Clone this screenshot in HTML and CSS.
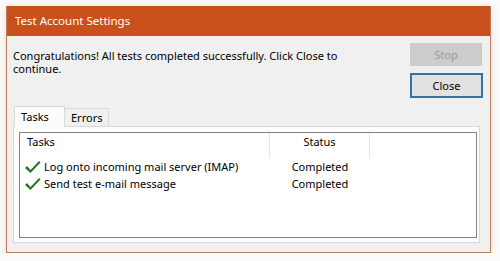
FILE: index.html
```html
<!DOCTYPE html>
<html>
<head>
<meta charset="utf-8">
<link rel="stylesheet" href="styles.css">
</head>
<body>
<div class="window">
  <div class="titlebar">Test Account Settings</div>
  <div class="content">
    <div class="top">
      <div class="message">Congratulations! All tests completed successfully. Click Close to continue.</div>
      <div class="buttons">
        <button class="btn btn-disabled">Stop</button>
        <button class="btn btn-default">Close</button>
      </div>
    </div>
    <div class="tabs">
      <div class="tabstrip">
        <div class="tab tab-active">Tasks</div>
        <div class="tab">Errors</div>
      </div>
      <div class="pane">
        <div class="list">
          <div class="row header">
            <div class="col col-task">Tasks</div>
            <div class="col col-status">Status</div>
            <div class="col col-rest"></div>
          </div>
          <div class="row item">
            <div class="col col-task"><svg class="check" viewBox="0 0 17 14" width="17" height="14"><path d="M1 8 L3 6 L6.5 10 L15 1 L16.5 2.5 L6.5 13 Z" fill="#2a742a"/></svg>Log onto incoming mail server (IMAP)</div>
            <div class="col col-status">Completed</div>
          </div>
          <div class="row item">
            <div class="col col-task"><svg class="check" viewBox="0 0 17 14" width="17" height="14"><path d="M1 8 L3 6 L6.5 10 L15 1 L16.5 2.5 L6.5 13 Z" fill="#2a742a"/></svg>Send test e-mail message</div>
            <div class="col col-status">Completed</div>
          </div>
        </div>
      </div>
    </div>
  </div>
</div>
</body>
</html>
```

FILE: styles.css
```css
html, body {
  margin: 0;
  padding: 0;
  background: #fbfbfb;
}
body {
  font-family: "Noto Sans", "Open Sans", sans-serif;
  font-size: 11px;
  color: #000;
}
.window {
  margin: 6px 0 0 6px;
  width: 483px;
  height: 245px;
  border: 1px solid #b9805f;
  border-top-color: #c9501a;
  background: #f0f0f0;
  box-shadow: 0 2px 6px rgba(200, 140, 110, 0.35);
  display: flex;
  flex-direction: column;
}
.titlebar {
  height: 29px;
  line-height: 28px;
  background: #c9501a;
  color: #fff;
  font-size: 11.5px;
  padding-left: 8px;
}
.content {
  flex: 1;
  display: flex;
  flex-direction: column;
  padding: 7px 7px 0 6px;
}
.top {
  display: flex;
  justify-content: space-between;
}
.message {
  margin-top: 6px;
  width: 340px;
  line-height: 13px;
}
.buttons {
  display: flex;
  flex-direction: column;
  gap: 7px;
}
.btn {
  font-family: inherit;
  font-size: 11px;
  width: 73px;
  height: 23px;
  padding: 0;
  border: 1px solid #adadad;
  background: #e1e1e1;
  color: #000;
}
.btn-disabled {
  background: #cccccc;
  border-color: #cccccc;
  color: #9a9a9a;
  width: 72px;
}
.btn-default {
  height: 25px;
  border: 2px solid #2f73a9;
}
.tabs {
  margin-top: 8px;
  margin-right: 3px;
  display: flex;
  flex-direction: column;
}
.tabstrip {
  display: flex;
  padding-left: 1px;
  height: 20px;
  align-items: flex-end;
}
.tab {
  height: 17px;
  line-height: 17px;
  padding: 0 6px;
  border: 1px solid #d9d9d9;
  border-bottom: none;
  background: #f0f0f0;
  margin-left: -1px;
}
.tab-active {
  height: 20px;
  line-height: 19px;
  width: 37px;
  background: #fcfcfc;
  position: relative;
  z-index: 1;
  margin-bottom: -1px;
  margin-left: 0;
}
.pane {
  border: 1px solid #d9d9d9;
  background: #fcfcfc;
  height: 106px;
  padding: 5px 2px 4px 5px;
}
.list {
  height: 100%;
  box-sizing: border-box;
  border: 1px solid #828282;
  background: #fff;
}
.row {
  display: flex;
}
.header {
  height: 25px;
  line-height: 18px;
}
.item {
  height: 17px;
  line-height: 17px;
}
.col-task {
  width: 250px;
  box-sizing: border-box;
  padding-left: 7px;
  display: flex;
  align-items: center;
}
.header .col-task {
  align-items: flex-start;
}
.item .col-task {
  padding-left: 4px;
}
.col-status {
  width: 100px;
  text-align: center;
}
.header .col-task,
.header .col-status {
  border-right: 1px solid #e5e5e5;
}
.header .col-status {
  width: 99px;
}
.check {
  margin-right: 3px;
  flex: none;
}
```
